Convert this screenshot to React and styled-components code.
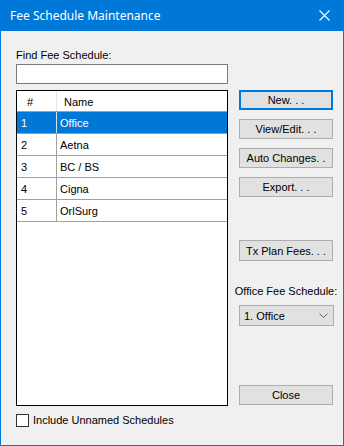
import React, { useState } from 'react';
import styled, { createGlobalStyle } from 'styled-components';

const GlobalStyle = createGlobalStyle`
  html, body {
    margin: 0;
    padding: 0;
    background: #f0f0f0;
  }
  * {
    box-sizing: border-box;
  }
`;

const Window = styled.div`
  width: 344px;
  height: 446px;
  display: flex;
  flex-direction: column;
  background: #f0f0f0;
  border: 1px solid #0078d7;
  border-top: none;
  font-family: 'Liberation Sans', Arial, sans-serif;
  font-size: 11px;
  color: #000;
`;

const TitleBar = styled.div`
  height: 31px;
  margin: 0 -1px;
  padding: 0 10px 0 10px;
  display: flex;
  align-items: center;
  justify-content: space-between;
  background: #0078d7;
  color: #fff;
  font-family: 'Noto Sans', sans-serif;
  font-size: 12px;
`;

const CloseX = styled.button`
  width: 20px;
  height: 20px;
  padding: 0;
  border: 0;
  background: transparent;
  display: flex;
  align-items: center;
  justify-content: center;
`;

const Body = styled.div`
  flex: 1;
  display: flex;
  gap: 11px;
  padding: 18px 10px 0 15px;
`;

const LeftColumn = styled.div`
  width: 212px;
  display: flex;
  flex-direction: column;
`;

const RightColumn = styled.div`
  width: 94px;
  display: flex;
  flex-direction: column;
  align-items: center;
  padding: 41px 0 40px;
`;

const Label = styled.div`
  line-height: 13px;
  white-space: nowrap;
  margin-bottom: ${(p) => p.$mb || 0}px;
  margin-top: ${(p) => p.$mt || 0}px;
`;

const TextBox = styled.input`
  width: 212px;
  height: 20px;
  margin: 0 0 6px 0;
  border: 1px solid #7a7a7a;
  background: #fff;
  font: inherit;
  padding: 0 3px;
  outline: none;
`;

const ListBox = styled.div`
  height: 316px;
  border: 1px solid #000;
  background: #fff;
  padding-top: 1px;
  display: flex;
  flex-direction: column;
`;

const HeaderRow = styled.div`
  height: 20px;
  display: flex;
  border-bottom: 1px solid #a0a0a0;
`;

const HeaderCell = styled.div`
  width: ${(p) => (p.$w ? `${p.$w}px` : 'auto')};
  flex: ${(p) => (p.$w ? 'none' : 1)};
  display: flex;
  align-items: center;
  padding-left: ${(p) => p.$pl}px;
  border-right: ${(p) => (p.$w ? '1px solid #e5e5e5' : 'none')};
`;

const Row = styled.div`
  height: 22px;
  display: flex;
  border-bottom: 1px solid #a0a0a0;
  background: ${(p) => (p.$selected ? '#0078d7' : '#fff')};
  color: ${(p) => (p.$selected ? '#fff' : '#000')};
`;

const Cell = styled.div`
  width: ${(p) => (p.$w ? `${p.$w}px` : 'auto')};
  flex: ${(p) => (p.$w ? 'none' : 1)};
  display: flex;
  align-items: center;
  padding-left: ${(p) => p.$pl}px;
  border-right: ${(p) => (p.$w ? `1px solid ${p.$selected ? '#cfe4f7' : '#a0a0a0'}` : 'none')};
`;

const CheckRow = styled.label`
  margin-top: 8px;
  display: flex;
  align-items: center;
  gap: 4px;
  line-height: 13px;
`;

const CheckBox = styled.span`
  width: 13px;
  height: 13px;
  border: 1px solid #333;
  background: #fff;
`;

const Button = styled.button`
  width: 94px;
  height: ${(p) => p.$h || 20}px;
  margin-top: ${(p) => p.$mt || 0}px;
  padding: 0;
  background: #e1e1e1;
  border: ${(p) => (p.$default ? '2px solid #0078d7' : '1px solid #adadad')};
  font-family: inherit;
  font-size: 11px;
  font-weight: 400;
  color: #000;
  flex: none;
`;

const Combo = styled.div`
  width: 95px;
  height: 21px;
  margin-top: 7px;
  margin-left: 1px;
  background: #e1e1e1;
  border: 1px solid #adadad;
  display: flex;
  align-items: center;
  justify-content: space-between;
  padding: 0 5px 0 4px;
`;

const Spacer = styled.div`
  flex: 1;
`;

const rows = [
  { n: 1, name: 'Office' },
  { n: 2, name: 'Aetna' },
  { n: 3, name: 'BC / BS' },
  { n: 4, name: 'Cigna' },
  { n: 5, name: 'OrlSurg' },
];

export default function App() {
  const [selected, setSelected] = useState(1);

  return (
    <>
      <GlobalStyle />
      <Window>
        <TitleBar>
          <span>Fee Schedule Maintenance</span>
          <CloseX aria-label="Close">
            <svg width="11" height="11" viewBox="0 0 11 11">
              <path d="M0.5 0.5 L10.5 10.5 M10.5 0.5 L0.5 10.5" stroke="#fff" strokeWidth="1.1" />
            </svg>
          </CloseX>
        </TitleBar>
        <Body>
          <LeftColumn>
            <Label $mb={2}>Find Fee Schedule:</Label>
            <TextBox type="text" />
            <ListBox>
              <HeaderRow>
                <HeaderCell $w={40} $pl={10}>#</HeaderCell>
                <HeaderCell $pl={7}>Name</HeaderCell>
              </HeaderRow>
              {rows.map((r) => (
                <Row key={r.n} $selected={selected === r.n} onClick={() => setSelected(r.n)}>
                  <Cell $w={40} $pl={4} $selected={selected === r.n}>{r.n}</Cell>
                  <Cell $pl={3}>{r.name}</Cell>
                </Row>
              ))}
            </ListBox>
            <CheckRow>
              <CheckBox />
              <span>Include Unnamed Schedules</span>
            </CheckRow>
          </LeftColumn>
          <RightColumn>
            <Button $default>New. . .</Button>
            <Button $mt={9}>View/Edit. . .</Button>
            <Button $mt={9}>Auto Changes. .</Button>
            <Button $mt={9}>Export. . .</Button>
            <Button $mt={43} $h={21}>Tx Plan Fees. . .</Button>
            <Label $mt={24}>Office Fee Schedule:</Label>
            <Combo>
              <span>1. Office</span>
              <svg width="9" height="5" viewBox="0 0 9 5">
                <path d="M0.5 0.5 L4.5 4.5 L8.5 0.5" stroke="#606060" fill="none" strokeWidth="1" />
              </svg>
            </Combo>
            <Spacer />
            <Button>Close</Button>
          </RightColumn>
        </Body>
      </Window>
    </>
  );
}
